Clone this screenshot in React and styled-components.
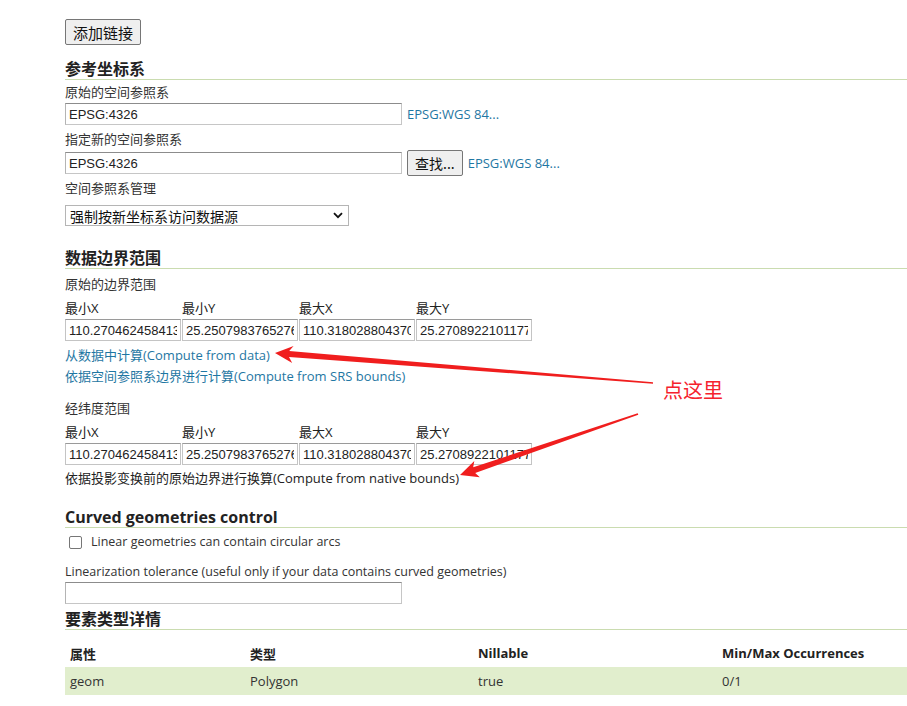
import styled, { createGlobalStyle } from 'styled-components';

const GlobalStyle = createGlobalStyle`
  html, body {
    margin: 0;
    padding: 0;
    background: #fff;
  }
  body {
    font-family: "Open Sans", "Noto Sans CJK SC", sans-serif;
    font-size: 13px;
    color: #333;
  }
`;

const Page = styled.div`
  position: relative;
  width: 907px;
  height: 706px;
  overflow: hidden;
  box-sizing: border-box;
  padding: 19px 0 0 65px;
`;

const Button = styled.button`
  height: 26px;
  padding: 0 7px;
  font-family: "Noto Sans CJK SC", sans-serif;
  font-size: ${(p) => p.size || 15}px;
  color: #111;
  background: #efefef;
  border: 1px solid #767676;
  border-radius: 2px;
  box-sizing: border-box;
  line-height: 1;
`;

const Heading = styled.h3`
  margin: ${(p) => p.top || 14}px 0 0 0;
  font-size: 16px;
  font-weight: 700;
  line-height: 20px;
  color: #222;
  border-bottom: 1px solid #cadcb0;
`;

const Label = styled.div`
  margin-top: ${(p) => p.top || 0}px;
  line-height: 20px;
  font-size: ${(p) => p.size || 13}px;
  color: #333;
  white-space: nowrap;
`;

const TextInput = styled.input`
  display: block;
  width: ${(p) => p.w || 337}px;
  height: 22px;
  box-sizing: border-box;
  margin-top: ${(p) => p.top || 0}px;
  padding: 0 3px;
  font-family: "Liberation Sans", Arial, sans-serif;
  font-size: 13px;
  color: #222;
  border: 1px solid #c6c6c6;
  border-top-color: #8c8c8c;
  border-left-color: #b4b4b4;
  border-radius: 0;
  outline: none;
`;

const Row = styled.div`
  display: flex;
  align-items: center;
  gap: 5px;
  margin-top: ${(p) => p.top || 0}px;
`;

const SrsLink = styled.a`
  color: #1f77a3;
  text-decoration: none;
  font-size: 13px;
  white-space: nowrap;
`;

const SelectWrap = styled.div`
  position: relative;
  width: 284px;
  height: 21px;
  margin-top: ${(p) => p.top || 0}px;
`;

const Select = styled.select`
  appearance: none;
  width: 100%;
  height: 100%;
  box-sizing: border-box;
  padding: 0 0 0 4px;
  font-family: "Noto Sans CJK SC", sans-serif;
  font-size: 14px;
  color: #111;
  background: #fff;
  border: 1px solid #b5b5b5;
  border-radius: 0;
  outline: none;
`;

const Chevron = styled.svg`
  position: absolute;
  right: 6px;
  top: 7px;
  pointer-events: none;
`;

const BoundsGrid = styled.div`
  display: grid;
  grid-template-columns: repeat(4, 116px);
  column-gap: 1px;
  margin-top: ${(p) => p.top || 0}px;
`;

const BoundLabel = styled.div`
  line-height: 20px;
  color: #222;
`;

const BoundInput = styled(TextInput)`
  width: 116px;
  margin-top: 1px;
  border-color: #c4c4c4;
  border-top-color: #9a9a9a;
`;

const ActionLink = styled.a`
  display: block;
  line-height: 21px;
  margin-top: ${(p) => p.top || 0}px;
  color: ${(p) => (p.plain ? '#222' : '#1f77a3')};
  text-decoration: none;
  white-space: nowrap;
`;

const CheckRow = styled.label`
  display: flex;
  align-items: center;
  gap: 9px;
  margin-top: 4px;
  padding-left: 4px;
  line-height: 20px;
  font-size: 12.5px;
  color: #333;
`;

const Box = styled.span`
  width: 11px;
  height: 11px;
  border: 1px solid #767676;
  border-radius: 2px;
  background: #fff;
`;

const Table = styled.table`
  margin-top: 9px;
  width: 900px;
  border-collapse: collapse;
  table-layout: fixed;
`;

const Th = styled.th`
  width: ${(p) => p.w}px;
  height: 28px;
  padding: 0 5px;
  text-align: left;
  font-weight: 700;
  color: #222;
  font-size: 13px;
`;

const Td = styled.td`
  height: 28px;
  padding: 0 5px;
  background: #e1eecd;
  color: #333;
  font-size: 13px;
`;

const Overlay = styled.svg`
  position: absolute;
  left: 0;
  top: 0;
  pointer-events: none;
`;

const Note = styled.div`
  position: absolute;
  left: 663px;
  top: 377px;
  font-family: "Noto Sans CJK SC", sans-serif;
  font-size: 20px;
  line-height: 26px;
  color: #f5222d;
`;

const bounds = ['110.270462458413', '25.2507983765276', '110.318028804370', '25.2708922101177'];
const boundLabels = ['最小X', '最小Y', '最大X', '最大Y'];

function Bounds({ top }) {
  return (
    <BoundsGrid top={top}>
      {boundLabels.map((l) => (
        <BoundLabel key={l}>{l}</BoundLabel>
      ))}
      {bounds.map((b) => (
        <BoundInput key={b} defaultValue={b} />
      ))}
    </BoundsGrid>
  );
}

export default function App() {
  return (
    <>
      <GlobalStyle />
      <Page>
        <Button>添加链接</Button>

        <Heading>参考坐标系</Heading>
        <Label top={2}>原始的空间参照系</Label>
        <Row top={1}>
          <TextInput defaultValue="EPSG:4326" />
          <SrsLink href="#">EPSG:WGS 84...</SrsLink>
        </Row>
        <Label top={4}>指定新的空间参照系</Label>
        <Row top={1}>
          <TextInput defaultValue="EPSG:4326" />
          <Button size={14}>查找...</Button>
          <SrsLink href="#">EPSG:WGS 84...</SrsLink>
        </Row>
        <Label top={2}>空间参照系管理</Label>
        <SelectWrap top={7}>
          <Select defaultValue="force">
            <option value="force">强制按新坐标系访问数据源</option>
          </Select>
          <Chevron width="10" height="7" viewBox="0 0 10 7">
            <path d="M1 1.2 L5 5.2 L9 1.2" fill="none" stroke="#111" strokeWidth="1.8" />
          </Chevron>
        </SelectWrap>

        <Heading top={22}>数据边界范围</Heading>
        <Label top={5}>原始的边界范围</Label>
        <Bounds top={4} />
        <ActionLink href="#" top={4}>从数据中计算(Compute from data)</ActionLink>
        <ActionLink href="#">依据空间参照系边界进行计算(Compute from SRS bounds)</ActionLink>
        <Label top={11}>经纬度范围</Label>
        <Bounds top={4} />
        <ActionLink href="#" plain top={3}>依据投影变换前的原始边界进行换算(Compute from native bounds)</ActionLink>

        <Heading top={18}>Curved geometries control</Heading>
        <CheckRow>
          <Box />
          Linear geometries can contain circular arcs
        </CheckRow>
        <Label top={10} size={12.5}>Linearization tolerance (useful only if your data contains curved geometries)</Label>
        <TextInput top={0} />

        <Heading top={5}>要素类型详情</Heading>
        <Table>
          <thead>
            <tr>
              <Th w={170}>属性</Th>
              <Th w={218}>类型</Th>
              <Th w={234}>Nillable</Th>
              <Th>Min/Max Occurrences</Th>
            </tr>
          </thead>
          <tbody>
            <tr>
              <Td>geom</Td>
              <Td>Polygon</Td>
              <Td>true</Td>
              <Td>0/1</Td>
            </tr>
          </tbody>
        </Table>

        <Overlay width="907" height="706" viewBox="0 0 907 706">
          <polygon
            fill="#f01e1e"
            points="653,383.7 289,357.1 292.2,362.9 275,353 293.6,345.9 289.2,351.1 653,382.3"
          />
          <polygon
            fill="#f01e1e"
            points="638.3,414.7 475.2,472.9 479.8,477.2 460,475 474.3,461.1 473.2,467.2 637.7,413.3"
          />
        </Overlay>
        <Note>点这里</Note>
      </Page>
    </>
  );
}
